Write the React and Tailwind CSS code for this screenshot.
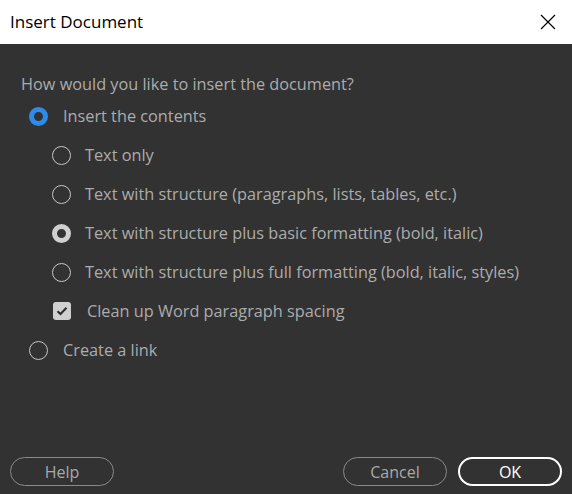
import React, { useState } from 'react';

const SUB_OPTIONS = [
  { key: 'text', label: 'Text only' },
  { key: 'structure', label: 'Text with structure (paragraphs, lists, tables, etc.)' },
  { key: 'basic', label: 'Text with structure plus basic formatting (bold, italic)' },
  { key: 'full', label: 'Text with structure plus full formatting (bold, italic, styles)' },
];

const Radio = ({ checked, accent }) => {
  if (checked) {
    return (
      <span
        className={`block w-[19px] h-[19px] rounded-full border-[5px] ${accent ? 'border-[#2d8ceb]' : 'border-[#d0d0d0]'}`}
      />
    );
  }
  return <span className="block w-[19px] h-[19px] rounded-full border-[1.5px] border-[#c8c8c8]" />;
};

const App = () => {
  const [mode, setMode] = useState('contents');
  const [sub, setSub] = useState('basic');
  const [clean, setClean] = useState(true);

  return (
    <div
      className="w-[572px] h-[494px] flex flex-col bg-[#323232] overflow-hidden"
      style={{ fontFamily: '"Open Sans", "Noto Sans", sans-serif' }}
    >
      <div className="h-[44px] bg-white flex items-center justify-between pl-[10px] pr-[16px] shrink-0">
        <span className="text-[17px] text-black">Insert Document</span>
        <svg width="16" height="16" viewBox="0 0 16 16" className="text-black">
          <path d="M1 1 L15 15 M15 1 L1 15" stroke="currentColor" strokeWidth="1.2" fill="none" />
        </svg>
      </div>

      <div className="flex-1 flex flex-col pt-[29px] pl-[21px] text-[16.3px] text-[#acacac]">
        <div className="h-[22px] leading-[22px]">How would you like to insert the document?</div>

        <button
          onClick={() => setMode('contents')}
          className="mt-[1.5px] h-[39px] flex items-center gap-[15px] pl-[8px] text-left"
        >
          <Radio checked={mode === 'contents'} accent />
          <span>Insert the contents</span>
        </button>

        <div className="flex flex-col pl-[31px]">
          {SUB_OPTIONS.map(o => (
            <button
              key={o.key}
              onClick={() => setSub(o.key)}
              className="h-[39px] flex items-center gap-[14px] text-left"
            >
              <Radio checked={sub === o.key} />
              <span>{o.label}</span>
            </button>
          ))}
          <button
            onClick={() => setClean(!clean)}
            className="h-[39px] flex items-center gap-[16px] pl-[1px] text-left"
          >
            <span className="w-[18px] h-[18px] rounded-[3px] bg-[#d0d0d0] flex items-center justify-center">
              {clean && (
                <svg width="12" height="10" viewBox="0 0 12 10">
                  <path d="M1.5 5.2 L4.5 8 L10.5 1.8" stroke="#2b2b2b" strokeWidth="2" fill="none" />
                </svg>
              )}
            </span>
            <span>Clean up Word paragraph spacing</span>
          </button>
        </div>

        <button
          onClick={() => setMode('link')}
          className="h-[39px] flex items-center gap-[15px] pl-[8px] text-left"
        >
          <Radio checked={mode === 'link'} accent />
          <span>Create a link</span>
        </button>
      </div>

      <div className="h-[29px] mb-[8px] flex items-center justify-between px-[10px] shrink-0 text-[16px]">
        <button className="w-[104px] h-[29px] rounded-full border border-[#8a8a8a] text-[#a9a9a9]">Help</button>
        <div className="flex gap-[11px]">
          <button className="w-[104px] h-[29px] rounded-full border border-[#8a8a8a] text-[#a9a9a9]">Cancel</button>
          <button className="w-[104px] h-[29px] rounded-full border-[2.5px] border-white text-white">OK</button>
        </div>
      </div>
    </div>
  );
};

export default App;
